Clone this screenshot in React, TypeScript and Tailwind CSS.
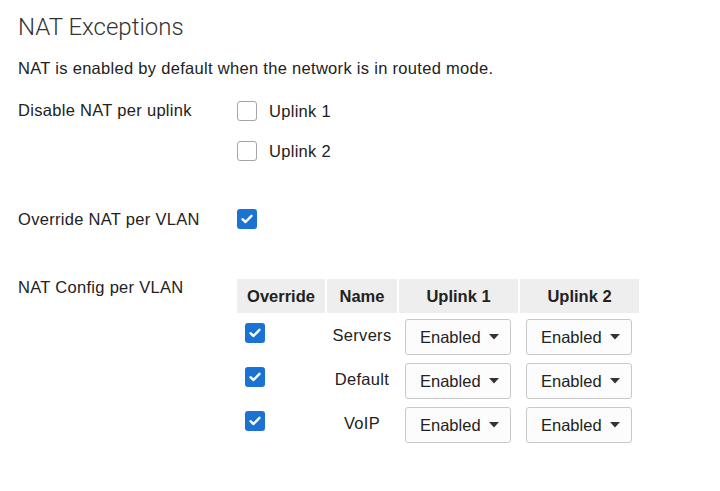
import React from "react";

const vlans = ["Servers", "Default", "VoIP"];

function Check({ checked }: { checked?: boolean }) {
  if (!checked) {
    return <span className="block w-5 h-5 rounded-[3px] border border-[#a6a6a6] bg-white" />;
  }
  return (
    <span className="flex items-center justify-center w-5 h-5 rounded-[3px] bg-[#1a73d2]">
      <svg width="12" height="10" viewBox="0 0 12 10" fill="none">
        <path d="M1.5 5.2 L4.5 8 L10.5 1.8" stroke="white" strokeWidth="2.4" strokeLinecap="round" strokeLinejoin="round" />
      </svg>
    </span>
  );
}

function Select() {
  return (
    <div className="flex items-center w-[106px] h-[36px] border border-[#c8c8c8] rounded-[3px] bg-[#fcfcfc] pl-[14px] text-[#222] tracking-normal">
      <span>Enabled</span>
      <svg className="ml-[8px]" width="10" height="6" viewBox="0 0 10 6">
        <path d="M0 0 H10 L5 5.5 Z" fill="#333" />
      </svg>
    </div>
  );
}

export default function App() {
  return (
    <div className="min-h-screen bg-white pl-[18px] text-[#222] text-[16.5px] tracking-[0.3px] font-['Liberation_Sans',Arial,sans-serif]">
      <h2 className="pt-[11px] text-[24px] leading-[32px] tracking-normal font-light text-[#333] font-['Roboto',sans-serif]">NAT Exceptions</h2>
      <p className="mt-[15px] leading-5">NAT is enabled by default when the network is in routed mode.</p>

      <div className="flex mt-[22px]">
        <div className="w-[219px] leading-5">Disable NAT per uplink</div>
        <div className="flex flex-col gap-5 pt-px">
          <label className="flex items-center gap-3 h-5">
            <Check />
            <span>Uplink 1</span>
          </label>
          <label className="flex items-center gap-3 h-5">
            <Check />
            <span>Uplink 2</span>
          </label>
        </div>
      </div>

      <div className="flex items-center mt-[48px]">
        <div className="w-[219px] leading-5">Override NAT per VLAN</div>
        <Check checked />
      </div>

      <div className="flex mt-[48px]">
        <div className="w-[219px] leading-5">NAT Config per VLAN</div>
        <div className="mt-[2px] grid grid-cols-[88px_70px_119px_119px] gap-x-[2px]">
          {["Override", "Name", "Uplink 1", "Uplink 2"].map((h) => (
            <div key={h} className="h-[34px] bg-[#eeeeee] flex items-center justify-center font-bold text-[#222] tracking-normal">
              {h}
            </div>
          ))}
          {vlans.map((v) => (
            <React.Fragment key={v}>
              <div className="h-[44px] pt-[10px] pl-[8px]">
                <Check checked />
              </div>
              <div className="h-[44px] pt-[12px] leading-5 text-center">{v}</div>
              <div className="h-[44px] pt-[6px] pl-[6px]">
                <Select />
              </div>
              <div className="h-[44px] pt-[6px] pl-[6px]">
                <Select />
              </div>
            </React.Fragment>
          ))}
        </div>
      </div>
    </div>
  );
}
